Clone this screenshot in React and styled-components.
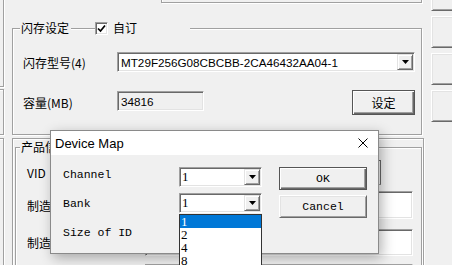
import React from "react";
import styled, { createGlobalStyle, css } from "styled-components";

const GlobalStyle = createGlobalStyle`
  html, body { margin: 0; padding: 0; background: #f0f0f0; }
  body {
    font-family: "Liberation Sans", "Noto Sans CJK SC", sans-serif;
    font-size: 12px;
    color: #000;
    overflow: hidden;
  }
  *, *::before, *::after { box-sizing: border-box; }
`;

const etched = css`
  border: 1px solid #a0a0a0;
  box-shadow: 1px 1px 0 #fff, inset 1px 1px 0 #fff;
`;

const sunken = css`
  border: 1px solid;
  border-color: #a0a0a0 #fff #fff #a0a0a0;
  box-shadow: inset 1px 1px 0 #696969, inset -1px -1px 0 #e3e3e3;
`;

const raised = css`
  border: 1px solid;
  border-color: #fff #696969 #696969 #fff;
  box-shadow: inset 1px 1px 0 #e3e3e3, inset -1px -1px 0 #a0a0a0;
`;

const Screen = styled.div`
  position: relative;
  width: 452px;
  height: 265px;
  overflow: hidden;
  background: #f0f0f0;
  display: flex;
  align-items: flex-start;
`;

/* ---------- left strip ---------- */
const LeftCol = styled.div`
  width: 4px;
  flex: none;
  display: flex;
  flex-direction: column;
`;

const SidePane = styled.div`
  ${etched}
  flex: none;
  width: 14px;
  margin-left: -10px;
  margin-top: ${(p) => p.$mt}px;
  height: ${(p) => p.$h}px;
`;

/* ---------- main column ---------- */
const MainCol = styled.div`
  width: 412px;
  margin-left: 8px;
  flex: none;
  display: flex;
  flex-direction: column;
`;

const TopStub = styled.div`
  ${etched}
  flex: none;
  width: 261px;
  height: 13px;
  margin: -10px 0 0 149px;
`;

const Frame = styled.div`
  ${etched}
  flex: none;
  width: 412px;
  height: 140px;
  margin-top: 3px;
  padding: 8px 1px 0 2px;
`;

const GroupBox = styled.div`
  ${etched}
  position: relative;
  flex: none;
  width: ${(p) => p.$w}px;
  height: ${(p) => p.$h}px;
  margin-top: ${(p) => p.$mt || 0}px;
  padding: ${(p) => p.$pad};
`;

const Caption = styled.div`
  position: absolute;
  top: -8px;
  left: ${(p) => p.$left}px;
  height: 14px;
  display: flex;
  align-items: center;
  line-height: 14px;
`;

const CaptionText = styled.span`
  background: #f0f0f0;
  padding: 0 2px 0 1px;
  font-family: "Noto Sans CJK SC", sans-serif;
  white-space: nowrap;
`;

const CaptionGap = styled.span`
  width: 24px;
  height: 14px;
`;

const CheckArea = styled.label`
  width: 95px;
  height: 14px;
  background: #f0f0f0;
  display: flex;
  align-items: center;
  gap: 5px;
  font-family: "Noto Sans CJK SC", sans-serif;
`;

const CheckBox = styled.span`
  width: 13px;
  height: 13px;
  flex: none;
  background: #fff;
  ${sunken}
  display: flex;
  align-items: center;
  justify-content: center;
`;

const FormGrid = styled.div`
  display: grid;
  grid-template-columns: 94px 1fr;
  row-gap: 18px;
  align-items: center;
`;

const FieldLabel = styled.span`
  font-family: "Noto Sans CJK SC", sans-serif;
  white-space: nowrap;
  color: ${(p) => p.$color || "#000"};
`;

const Combo = styled.div`
  display: flex;
  align-items: stretch;
  width: ${(p) => (p.$w ? `${p.$w}px` : "100%")};
  height: ${(p) => p.$h || 20}px;
  padding: 1px;
  background: #fff;
  ${sunken}
`;

const ComboText = styled.span`
  flex: 1;
  display: flex;
  align-items: center;
  padding-left: ${(p) => p.$pl ?? 2}px;
  white-space: nowrap;
  overflow: hidden;
  color: #000;
  ${(p) =>
    p.$serif
      ? css`
          font-family: "Liberation Serif", serif;
          font-size: 13px;
        `
      : css`
          font-family: "Liberation Sans", sans-serif;
          font-size: 11.7px;
        `}
`;

const DropBtn = styled.span`
  width: 16px;
  flex: none;
  background: #f0f0f0;
  border: 1px solid;
  border-color: #e3e3e3 #696969 #696969 #e3e3e3;
  box-shadow: inset 1px 1px 0 #fff, inset -1px -1px 0 #a0a0a0;
  display: flex;
  align-items: center;
  justify-content: center;
`;

const TextBox = styled.div`
  width: ${(p) => (p.$w ? `${p.$w}px` : "100%")};
  height: ${(p) => p.$h}px;
  margin-top: ${(p) => p.$mt || 0}px;
  background: ${(p) => p.$bg || "#fff"};
  ${sunken}
  padding: 0 0 0 3px;
  display: flex;
  align-items: center;
  font-size: 11.7px;
`;

const PlainBox = styled.div`
  width: ${(p) => p.$w}px;
  height: ${(p) => p.$h}px;
  border: 1px solid #a0a0a0;
  border-right-color: #696969;
  border-top-color: #696969;
  background: #f0f0f0;
`;

const SplitCell = styled.div`
  display: flex;
  justify-content: space-between;
  align-items: flex-start;
`;

const PushButton = styled.button`
  flex: none;
  width: ${(p) => p.$w}px;
  height: ${(p) => p.$h}px;
  margin: 0;
  padding: 0;
  background: #f0f0f0;
  color: #000;
  font-family: ${(p) =>
    p.$mono ? `"Liberation Mono", monospace` : `"Noto Sans CJK SC", sans-serif`};
  font-size: ${(p) => (p.$mono ? "11.5px" : "12px")};
  line-height: 1;
  ${(p) =>
    p.$default
      ? css`
          border: 1px solid #555;
          box-shadow: inset 1px 1px 0 #fff, inset -1px -1px 0 #696969,
            inset -2px -2px 0 #a0a0a0;
        `
      : raised}
`;

const Rows = styled.div`
  display: flex;
  flex-direction: column;
`;

const FormRow = styled.div`
  display: grid;
  grid-template-columns: 118px 1fr;
  align-items: center;
  margin-top: ${(p) => p.$mt}px;
`;

/* ---------- right column ---------- */
const RightCol = styled.div`
  width: 30px;
  margin-left: 7px;
  margin-top: -21px;
  flex: none;
  display: flex;
  flex-direction: column;
  gap: 5px;
`;

const SideButton = styled.div`
  height: 32px;
  flex: none;
  background: #f0f0f0;
  ${raised}
`;

/* ---------- dialog ---------- */
const Dialog = styled.div`
  position: absolute;
  left: 50px;
  top: 130px;
  width: 329px;
  height: 124px;
  border: 1px solid #8a8a8a;
  background: #f0f0f0;
  box-shadow: 3px 4px 12px rgba(0, 0, 0, 0.3);
  display: flex;
  flex-direction: column;
`;

const TitleBar = styled.div`
  flex: none;
  height: 24px;
  background: #fff;
  display: flex;
  align-items: center;
  justify-content: space-between;
  padding: 0 10px 0 4px;
`;

const Title = styled.span`
  font-family: "Liberation Sans", sans-serif;
  font-size: 13px;
  color: #000;
`;

const DialogBody = styled.div`
  flex: 1;
  display: flex;
  padding: 0 11px 0 12px;
`;

const LabelCol = styled.div`
  width: 116px;
  flex: none;
  padding-top: 5px;
  display: flex;
  flex-direction: column;
  font-family: "Liberation Mono", monospace;
  font-size: 11.5px;
  line-height: 29px;
  white-space: pre;
`;

const ComboCol = styled.div`
  position: relative;
  width: 83px;
  flex: none;
  padding-top: 12px;
  display: flex;
  flex-direction: column;
  gap: 6px;
`;

const ButtonCol = styled.div`
  width: 88px;
  flex: none;
  margin-left: 17px;
  padding-top: 12px;
  display: flex;
  flex-direction: column;
  gap: 5px;
`;

const DropList = styled.ul`
  position: absolute;
  left: 0;
  top: 59px;
  width: 83px;
  margin: 0;
  padding: 0;
  list-style: none;
  background: #fff;
  border: 1px solid #333;
  font-family: "Liberation Serif", serif;
  font-size: 13px;
  z-index: 2;
`;

const DropItem = styled.li`
  height: 13px;
  line-height: 13px;
  padding-left: 1px;
  background: ${(p) => (p.$sel ? "#0078d7" : "transparent")};
  color: ${(p) => (p.$sel ? "#fff" : "#000")};
`;

const Arrow = () => (
  <svg width="7" height="4" viewBox="0 0 7 4">
    <polygon points="0,0 7,0 3.5,4" fill="#000" />
  </svg>
);

const Check = () => (
  <svg width="9" height="9" viewBox="0 0 9 9">
    <polyline points="1,4.5 3.5,7 8,1.5" fill="none" stroke="#000" strokeWidth="1.7" />
  </svg>
);

const CloseX = () => (
  <svg width="10" height="10" viewBox="0 0 10 10">
    <path d="M0.5 0.5 L9.5 9.5 M9.5 0.5 L0.5 9.5" stroke="#000" strokeWidth="1" />
  </svg>
);

export default function App() {
  return (
    <>
      <GlobalStyle />
      <Screen>
        <LeftCol>
          <SidePane $mt={-10} $h={97} />
          <SidePane $mt={2} $h={46} />
          <SidePane $mt={3} $h={140} />
        </LeftCol>

        <MainCol>
          <TopStub />
          <GroupBox $w={410} $h={107} $mt={25} $pad="23px 6px 0 10px">
            <Caption $left={7}>
              <CaptionText>闪存设定</CaptionText>
              <CaptionGap />
              <CheckArea>
                <CheckBox>
                  <Check />
                </CheckBox>
                自订
              </CheckArea>
            </Caption>
            <FormGrid>
              <FieldLabel>闪存型号(4)</FieldLabel>
              <Combo>
                <ComboText>MT29F256G08CBCBB-2CA46432AA04-1</ComboText>
                <DropBtn>
                  <Arrow />
                </DropBtn>
              </Combo>
              <FieldLabel>容量(MB)</FieldLabel>
              <SplitCell>
                <TextBox $w={87} $h={20} $mt={1} $bg="#f0f0f0">
                  34816
                </TextBox>
                <PushButton $w={63} $h={25} $default>
                  设定
                </PushButton>
              </SplitCell>
            </FormGrid>
          </GroupBox>

          <Frame>
            <GroupBox $w={407} $h={140} $pad="12px 8px 0 11px">
              <Caption $left={4}>
                <CaptionText>产品信息</CaptionText>
              </Caption>
              <Rows>
                <FormRow $mt={0}>
                  <FieldLabel>VID</FieldLabel>
                  <PlainBox $w={236} $h={25} />
                </FormRow>
                <FormRow $mt={6}>
                  <FieldLabel>制造商</FieldLabel>
                  <TextBox $h={28} />
                </FormRow>
                <FormRow $mt={10}>
                  <FieldLabel>制造日期</FieldLabel>
                  <TextBox $h={27} />
                </FormRow>
                <FormRow $mt={8}>
                  <FieldLabel>序列号</FieldLabel>
                  <TextBox $h={27} />
                </FormRow>
              </Rows>
            </GroupBox>
          </Frame>
        </MainCol>

        <RightCol>
          <SideButton />
          <SideButton />
          <SideButton />
          <SideButton />
        </RightCol>

        <Dialog>
          <TitleBar>
            <Title>Device Map</Title>
            <CloseX />
          </TitleBar>
          <DialogBody>
            <LabelCol>
              <span>Channel</span>
              <span>Bank</span>
              <span>Size of ID</span>
            </LabelCol>
            <ComboCol>
              <Combo $w={83}>
                <ComboText $serif $pl={1}>1</ComboText>
                <DropBtn>
                  <Arrow />
                </DropBtn>
              </Combo>
              <Combo $w={83}>
                <ComboText $serif $pl={1}>1</ComboText>
                <DropBtn>
                  <Arrow />
                </DropBtn>
              </Combo>
              <DropList>
                <DropItem $sel>1</DropItem>
                <DropItem>2</DropItem>
                <DropItem>4</DropItem>
                <DropItem>8</DropItem>
              </DropList>
            </ComboCol>
            <ButtonCol>
              <PushButton $w={88} $h={23} $mono $default>
                OK
              </PushButton>
              <PushButton $w={88} $h={23} $mono>
                Cancel
              </PushButton>
            </ButtonCol>
          </DialogBody>
        </Dialog>
      </Screen>
    </>
  );
}
